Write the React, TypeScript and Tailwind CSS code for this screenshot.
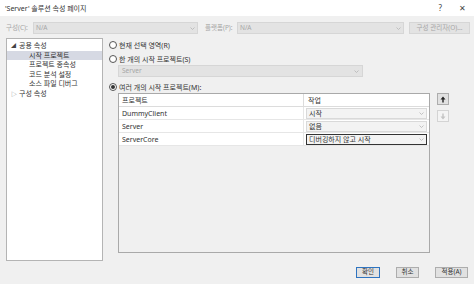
import React from "react";

const font = { fontFamily: "'Noto Sans', 'Noto Sans CJK KR', sans-serif" };

function Chevron({ light }: { light?: boolean }) {
  return (
    <svg width="5" height="3" viewBox="0 0 5 3" className="shrink-0">
      <path d="M0.5 0.5 L2.5 2.5 L4.5 0.5" fill="none" stroke={light ? "#b5b5b5" : "#8a8a8a"} strokeWidth="0.8" />
    </svg>
  );
}

function Radio({ checked }: { checked?: boolean }) {
  return (
    <div className="w-[8px] h-[8px] rounded-full border border-[#555] bg-white flex items-center justify-center shrink-0">
      {checked && <div className="w-[4px] h-[4px] rounded-full bg-[#333]" />}
    </div>
  );
}

function RowCombo({ text, focused }: { text: string; focused?: boolean }) {
  return (
    <div
      className={`mx-[2px] h-[11px] flex items-center justify-between px-[2px] ${
        focused ? "border border-[#333] bg-[#f3f3f3]" : "border border-[#d9d9d9] bg-[#f3f3f3]"
      }`}
    >
      <span className="text-[7px] leading-none text-[#333]">{text}</span>
      <Chevron light />
    </div>
  );
}

export default function App() {
  const rows: [string, string][] = [
    ["DummyClient", "시작"],
    ["Server", "없음"],
    ["ServerCore", "디버깅하지 않고 시작"],
  ];
  return (
    <div className="w-[474px] h-[284px] bg-[#f0f0f0] flex flex-col text-[#333] overflow-hidden" style={font}>
      {/* title bar */}
      <div className="h-[16px] bg-white flex items-center pl-[5px] pr-[8px] shrink-0">
        <span className="text-[7px] leading-none text-[#333]">'Server' 솔루션 속성 페이지</span>
        <div className="flex-1" />
        <span className="text-[8px] leading-none text-[#444] mr-[17px]">?</span>
        <span className="text-[8px] leading-none text-[#444]">✕</span>
      </div>

      {/* config row */}
      <div className="mt-[6px] h-[12px] flex items-center pl-[6px] shrink-0">
        <span className="w-[27px] text-[6.5px] leading-none text-[#a6a6a6]">구성(C):</span>
        <div className="w-[165px] h-[12px] bg-[#e3e3e3] border border-[#d6d6d6] flex items-center justify-between px-[2px]">
          <span className="text-[6.5px] leading-none text-[#a6a6a6]">N/A</span>
          <Chevron light />
        </div>
        <span className="ml-[7px] w-[32px] text-[6.5px] leading-none text-[#a6a6a6]">플랫폼(P):</span>
        <div className="w-[167px] h-[12px] bg-[#e3e3e3] border border-[#d6d6d6] flex items-center justify-between px-[2px]">
          <span className="text-[6.5px] leading-none text-[#a6a6a6]">N/A</span>
          <Chevron light />
        </div>
        <div className="ml-[5px] w-[61px] h-[12px] bg-[#e3e3e3] border border-[#d6d6d6] flex items-center justify-center">
          <span className="text-[6.5px] leading-none text-[#a6a6a6]">구성 관리자(O)...</span>
        </div>
      </div>

      {/* main */}
      <div className="mt-[4px] flex shrink-0">
        {/* tree */}
        <div className="ml-[6px] w-[97px] h-[223px] bg-white border border-[#b4b4b4] pt-[2px] flex flex-col">
          <div className="h-[9.5px] flex items-center pl-[4px]">
            <span className="text-[5px] leading-none text-[#444] w-[8px]">◢</span>
            <span className="text-[7px] leading-none">공용 속성</span>
          </div>
          <div className="h-[9.5px] flex items-center pl-[22px] bg-[#d6d9e3]">
            <span className="text-[7px] leading-none">시작 프로젝트</span>
          </div>
          <div className="h-[9.5px] flex items-center pl-[22px]">
            <span className="text-[7px] leading-none">프로젝트 종속성</span>
          </div>
          <div className="h-[9.5px] flex items-center pl-[22px]">
            <span className="text-[7px] leading-none">코드 분석 설정</span>
          </div>
          <div className="h-[9.5px] flex items-center pl-[22px]">
            <span className="text-[7px] leading-none">소스 파일 디버그</span>
          </div>
          <div className="h-[10px] flex items-center pl-[4px]">
            <span className="text-[6px] leading-none text-[#777] w-[8px]">▷</span>
            <span className="text-[7px] leading-none">구성 속성</span>
          </div>
        </div>

        {/* right */}
        <div className="ml-[6px] flex flex-col">
          <div className="mt-[2px] h-[10px] flex items-center gap-[2px]">
            <Radio />
            <span className="text-[7px] leading-none">현재 선택 영역(R)</span>
          </div>
          <div className="mt-[4px] h-[10px] flex items-center gap-[2px]">
            <Radio />
            <span className="text-[7px] leading-none">한 개의 시작 프로젝트(S)</span>
          </div>
          <div className="mt-[1px] ml-[9px] w-[245px] h-[12px] bg-[#e3e3e3] border border-[#d6d6d6] flex items-center justify-between px-[3px]">
            <span className="text-[6.5px] leading-none text-[#a6a6a6]">Server</span>
            <Chevron light />
          </div>
          <div className="mt-[5px] h-[10px] flex items-center gap-[2px]">
            <Radio checked />
            <span className="text-[7px] leading-none">여러 개의 시작 프로젝트(M):</span>
          </div>
          <div className="mt-[1px] ml-[9px] flex">
            <div className="w-[312px] h-[160px] border border-[#a9a9a9] bg-[#f0f0f0] flex flex-col">
              <div className="h-[13px] bg-white flex border-b border-[#dcdcdc]">
                <div className="w-[185px] border-r border-[#dcdcdc] flex items-center pl-[3px]">
                  <span className="text-[7px] leading-none">프로젝트</span>
                </div>
                <div className="flex-1 flex items-center pl-[4px]">
                  <span className="text-[7px] leading-none">작업</span>
                </div>
              </div>
              {rows.map(([p, a], i) => (
                <div key={p} className="h-[13px] bg-white flex border-b border-[#e6e6e6]">
                  <div className="w-[185px] border-r border-[#e6e6e6] flex items-center pl-[3px]">
                    <span className="text-[7px] leading-none">{p}</span>
                  </div>
                  <div className="flex-1 flex flex-col justify-center">
                    <RowCombo text={a} focused={i === 2} />
                  </div>
                </div>
              ))}
            </div>
            <div className="ml-[7px] flex flex-col gap-[5px]">
              <div className="w-[12px] h-[12px] bg-[#e1e1e1] border border-[#adadad] flex items-center justify-center">
                <svg width="6" height="7" viewBox="0 0 6 7">
                  <path d="M3 0.5 L5.5 3.5 L3.7 3.5 L3.7 6.5 L2.3 6.5 L2.3 3.5 L0.5 3.5 Z" fill="#222" />
                </svg>
              </div>
              <div className="w-[12px] h-[12px] bg-[#f4f4f4] border border-[#d4d4d4] flex items-center justify-center">
                <svg width="6" height="7" viewBox="0 0 6 7">
                  <path d="M3 6.5 L5.5 3.5 L3.7 3.5 L3.7 0.5 L2.3 0.5 L2.3 3.5 L0.5 3.5 Z" fill="#c4c4c4" />
                </svg>
              </div>
            </div>
          </div>
        </div>
      </div>

      {/* buttons */}
      <div className="mt-[6px] flex justify-end pr-[6px] gap-[16px] shrink-0">
        <div className="w-[24px] h-[11px] bg-[#e1e1e1] border border-[#2f74c0] flex items-center justify-center">
          <span className="text-[6.5px] leading-none">확인</span>
        </div>
        <div className="w-[23px] h-[11px] bg-[#e1e1e1] border border-[#adadad] flex items-center justify-center">
          <span className="text-[6.5px] leading-none">취소</span>
        </div>
        <div className="w-[33px] h-[11px] bg-[#e1e1e1] border border-[#adadad] flex items-center justify-center">
          <span className="text-[6.5px] leading-none">적용(A)</span>
        </div>
      </div>
    </div>
  );
}
